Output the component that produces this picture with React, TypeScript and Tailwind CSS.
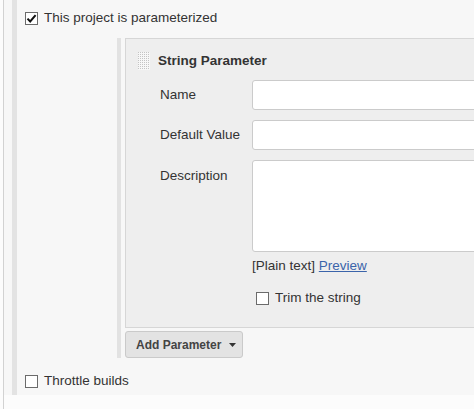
import React from "react";

const Checkbox = ({ checked = false }: { checked?: boolean }) => (
  <span className="flex h-[13px] w-[13px] shrink-0 items-center justify-center border border-[#6b6b6b] bg-white">
    {checked && (
      <svg width="11" height="11" viewBox="0 0 11 11">
        <path d="M1.5 5.6 L4.2 8.4 L9.6 2.2" fill="none" stroke="#111" strokeWidth="2" />
      </svg>
    )}
  </span>
);

const DragHandle = () => (
  <svg width="12" height="18" viewBox="0 0 12 18" className="shrink-0">
    <defs>
      <pattern id="dots" width="2" height="2" patternUnits="userSpaceOnUse">
        <rect width="2" height="2" fill="#f7f7f7" />
        <rect width="1" height="1" fill="#c4c4c4" />
      </pattern>
    </defs>
    <rect width="12" height="18" fill="url(#dots)" />
  </svg>
);

const Field = ({ label, tall = false }: { label: string; tall?: boolean }) => (
  <div className={`flex ${tall ? "items-start" : "items-center"}`}>
    <span className={`w-[92px] shrink-0 text-[13.5px] text-[#333] ${tall ? "pt-[6px]" : ""}`}>{label}</span>
    {tall ? (
      <div className="h-[92px] w-[260px] shrink-0 rounded-[3px] border border-[#cbcbcb] bg-white" />
    ) : (
      <div className="h-[30px] w-[260px] shrink-0 rounded-[3px] border border-[#cbcbcb] bg-white" />
    )}
  </div>
);

export default function App() {
  return (
    <div
      className="flex h-[409px] w-[474px] overflow-hidden bg-[#fcfcfc] text-[#333]"
      style={{ fontFamily: '"Liberation Sans", Arial, sans-serif' }}
    >
      <div className="w-[3px] shrink-0" />
      <div className="flex min-w-0 flex-1 flex-col border-l border-[#d2d2d2]">
        <div className="flex h-[395px] bg-[#f7f7f7] pl-[8px]">
          <div className="flex min-w-0 flex-1 flex-col border-l-[5px] border-[#e3e3e3]">
            {/* parameterized */}
            <div className="flex items-center gap-[6px] pl-[8px] pt-[11px]">
              <Checkbox checked />
              <span className="text-[13.5px] leading-[14px]">This project is parameterized</span>
            </div>

            {/* parameter block */}
            <div className="ml-[100px] mt-[13px] flex w-[420px] flex-col border-l-[4px] border-[#e2e2e2] pl-[4px]">
              <div className="border border-[#d6d6d6] bg-[#eeeeee] pb-[22px] pl-[12px]">
                <div className="flex items-center gap-[8px] pt-[12px]">
                  <DragHandle />
                  <span className="text-[13.5px] font-bold text-[#333]">String Parameter</span>
                </div>
                <div className="flex flex-col gap-[10px] pl-[22px] pt-[9px]">
                  <Field label="Name" />
                  <Field label="Default Value" />
                  <Field label="Description" tall />
                </div>
                <div className="pl-[114px] pt-[6px] text-[13.5px] leading-[15px]">
                  [Plain text]{" "}
                  <a className="text-[#3b64aa] underline" href="#">
                    Preview
                  </a>
                </div>
                <div className="flex items-center gap-[6px] pl-[118px] pt-[18px]">
                  <Checkbox />
                  <span className="text-[13.5px] leading-[14px]">Trim the string</span>
                </div>
              </div>
              <div className="pt-[3px]">
                <button className="flex h-[27px] w-[118px] items-center gap-[8px] rounded-[3px] border border-[#cacaca] bg-[#e3e3e3] pl-[10px] text-[12px] font-bold text-[#444]">
                  Add Parameter
                  <svg width="7" height="4" viewBox="0 0 7 4">
                    <path d="M0 0 L7 0 L3.5 4 Z" fill="#333" />
                  </svg>
                </button>
              </div>
            </div>

            {/* throttle */}
            <div className="flex items-center gap-[6px] pl-[8px] pt-[16px]">
              <Checkbox />
              <span className="text-[13.5px] leading-[14px]">Throttle builds</span>
            </div>
          </div>
        </div>
      </div>
    </div>
  );
}
